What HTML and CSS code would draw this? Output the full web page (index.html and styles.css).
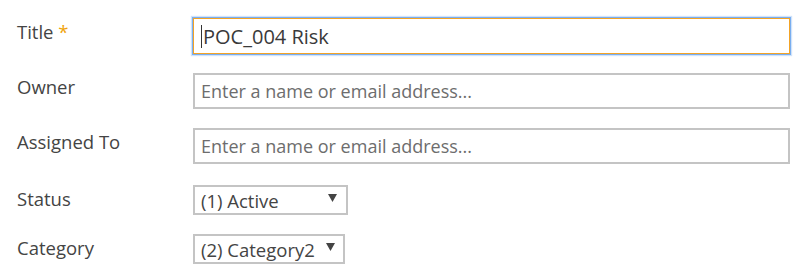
FILE: index.html
```html
<!DOCTYPE html>
<html>
<head>
<meta charset="utf-8">
<link rel="stylesheet" href="styles.css">
</head>
<body>
<div class="form">
  <div class="row row-tall">
    <div class="label">Title <span class="req">*</span></div>
    <div class="field">
      <div class="textbox focused"><span class="caret"></span><span class="value">POC_004 Risk</span></div>
    </div>
  </div>
  <div class="row row-tall">
    <div class="label">Owner</div>
    <div class="field">
      <div class="textbox"><span class="placeholder">Enter a name or email address...</span></div>
    </div>
  </div>
  <div class="row row-tall">
    <div class="label">Assigned To</div>
    <div class="field">
      <div class="textbox"><span class="placeholder">Enter a name or email address...</span></div>
    </div>
  </div>
  <div class="row row-short row-status">
    <div class="label">Status</div>
    <div class="field">
      <div class="select select-status"><span class="value">(1) Active</span><svg class="arrow" width="9" height="8" viewBox="0 0 9 8"><polygon points="0,0 9,0 4.5,8" fill="#444"/></svg></div>
    </div>
  </div>
  <div class="row row-short">
    <div class="label">Category</div>
    <div class="field">
      <div class="select select-category"><span class="value">(2) Category2</span><svg class="arrow" width="9" height="8" viewBox="0 0 9 8"><polygon points="0,0 9,0 4.5,8" fill="#444"/></svg></div>
    </div>
  </div>
</div>
</body>
</html>
```
FILE: styles.css
```css
html, body {
  margin: 0;
  padding: 0;
  background: #ffffff;
}
body {
  font-family: "Open Sans", "Noto Sans", "Liberation Sans", sans-serif;
  color: #444444;
}
.form {
  display: flex;
  flex-direction: column;
  gap: 19px;
  padding: 18px 0 0 17px;
}
.row {
  display: flex;
  align-items: flex-start;
}
.row-status {
  margin-top: 2px;
}
.label {
  width: 176px;
  flex: none;
  font-size: 18.5px;
  line-height: 24px;
  color: #444444;
  padding-top: 2px;
}
.req {
  color: #f0a30a;
}
.field {
  flex: none;
}
.textbox {
  box-sizing: border-box;
  width: 597px;
  height: 36px;
  border: 2px solid #c4c4c4;
  display: flex;
  align-items: center;
  padding-left: 6px;
  font-size: 18px;
}
.textbox.focused {
  border: 1px solid #f3a325;
  box-shadow: 0 0 0 1px #79aef0, 0 0 1px 2px rgba(121, 174, 240, 0.35);
  padding-left: 7px;
  font-size: 20px;
}
.caret {
  width: 1px;
  height: 23px;
  background: #333333;
  margin-right: 1px;
}
.value {
  color: #3a3a3a;
}
.placeholder {
  color: #6d6d6d;
}
.select {
  box-sizing: border-box;
  height: 30px;
  border: 2px solid #c4c4c4;
  display: flex;
  align-items: center;
  justify-content: space-between;
  padding: 0 9px 0 6px;
  font-size: 18.5px;
}
.select .value {
  color: #444444;
}
.select-status {
  width: 155px;
}
.select-category {
  width: 152px;
  padding-right: 8px;
}
.arrow {
  display: block;
  margin-top: -5px;
  flex: none;
}
```
